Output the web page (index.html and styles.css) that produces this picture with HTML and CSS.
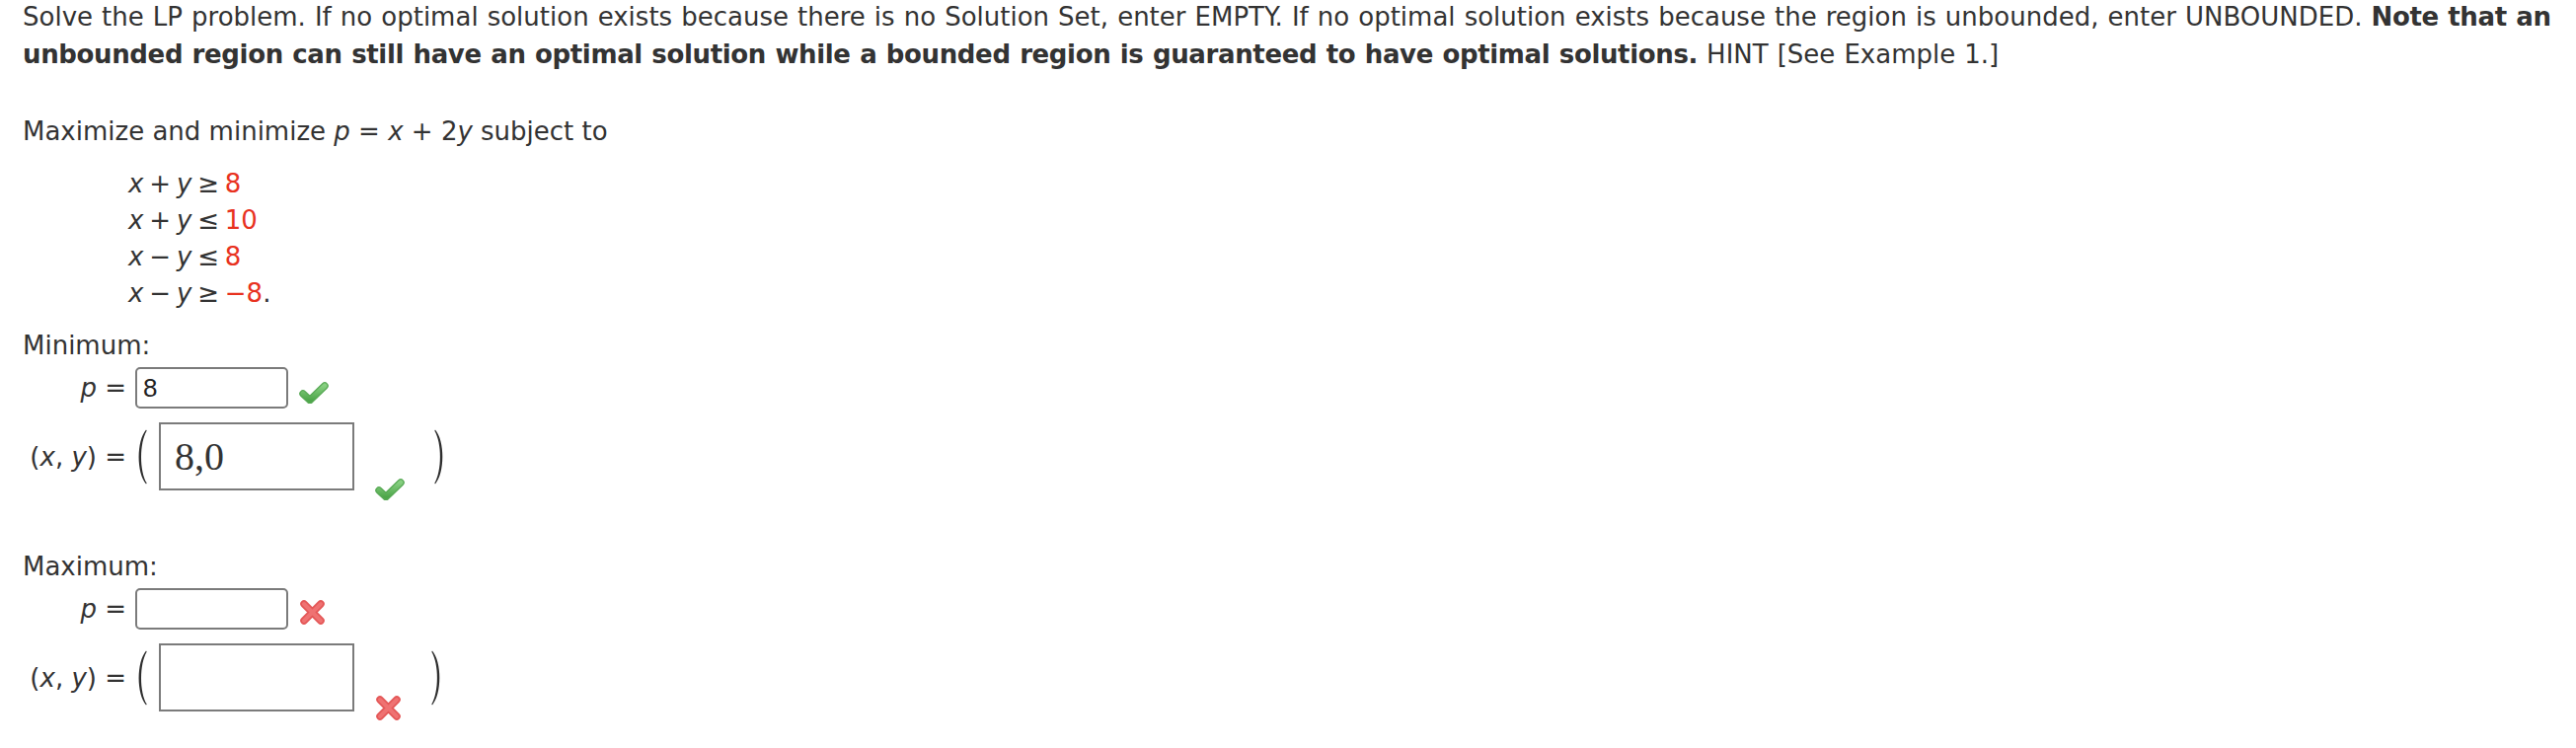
FILE: index.html
```html
<!DOCTYPE html>
<html lang="en">
<head>
<meta charset="utf-8">
<title>LP problem</title>
<link rel="stylesheet" href="styles.css">
</head>
<body>
<div class="page">
  <p class="intro">Solve the LP problem. If no optimal solution exists because there is no Solution Set, enter EMPTY. If no optimal solution exists because the region is unbounded, enter UNBOUNDED. <b>Note that an unbounded region can still have an optimal solution while a bounded region is guaranteed to have optimal solutions.</b> HINT [See Example 1.]</p>

  <p class="objective">Maximize and minimize <i>p</i> = <i>x</i> + 2<i>y</i> subject to</p>

  <div class="constraints">
    <div class="constraint"><i>x</i> + <i>y</i> ≥ <span class="num">8</span></div>
    <div class="constraint"><i>x</i> + <i>y</i> ≤ <span class="num">10</span></div>
    <div class="constraint"><i>x</i> − <i>y</i> ≤ <span class="num">8</span></div>
    <div class="constraint"><i>x</i> − <i>y</i> ≥ <span class="num">−8</span>.</div>
  </div>

  <section class="answer answer-min">
    <div class="heading">Minimum:</div>
    <div class="row row-p">
      <span class="label"><i>p</i> =</span>
      <input class="field-small" type="text" value="8" readonly>
      <svg class="icon mark-p" width="30" height="23" viewBox="0 0 30 23" aria-hidden="true">
        <defs>
          <linearGradient id="g1" x1="0" y1="0" x2="0" y2="1">
            <stop offset="0" stop-color="#86cf80"/>
            <stop offset="1" stop-color="#4ea64a"/>
          </linearGradient>
        </defs>
        <polyline points="4,13 11,19.5 26,5" fill="none" stroke="#58a955" stroke-width="7.5" stroke-linecap="round" stroke-linejoin="round"/>
        <polyline points="4,13 11,19.5 26,5" fill="none" stroke="url(#g1)" stroke-width="5" stroke-linecap="round" stroke-linejoin="round"/>
      </svg>
    </div>
    <div class="row row-xy">
      <span class="label">(<i>x</i>, <i>y</i>) =</span>
      <svg class="paren" width="12" height="56" viewBox="0 0 12 56" aria-hidden="true"><path d="M11,0.5 C1.2,12 1.2,44 11,55.5 L11.7,54.6 C4.2,42 4.2,14 11.7,1.4 Z" fill="#2e2e2e"/></svg>
      <input class="field-big" type="text" value="8,0" readonly>
      <span class="mark-slot">
        <svg class="icon" width="30" height="23" viewBox="0 0 30 23" aria-hidden="true">
          <polyline points="4,13 11,19.5 26,5" fill="none" stroke="#58a955" stroke-width="7.5" stroke-linecap="round" stroke-linejoin="round"/>
          <polyline points="4,13 11,19.5 26,5" fill="none" stroke="url(#g1)" stroke-width="5" stroke-linecap="round" stroke-linejoin="round"/>
        </svg>
      </span>
      <svg class="paren" width="12" height="56" viewBox="0 0 12 56" aria-hidden="true"><path d="M1,0.5 C10.8,12 10.8,44 1,55.5 L0.3,54.6 C7.8,42 7.8,14 0.3,1.4 Z" fill="#2e2e2e"/></svg>
    </div>
  </section>

  <section class="answer answer-max">
    <div class="heading">Maximum:</div>
    <div class="row row-p">
      <span class="label"><i>p</i> =</span>
      <input class="field-small" type="text" value="" readonly>
      <svg class="icon mark-p mark-x" width="27" height="27" viewBox="0 0 27 27" aria-hidden="true">
        <path d="M5,5 L22,22 M22,5 L5,22" fill="none" stroke="#e45757" stroke-width="7.5" stroke-linecap="round"/>
        <path d="M5,5 L22,22 M22,5 L5,22" fill="none" stroke="#ef7272" stroke-width="4" stroke-linecap="round"/>
      </svg>
    </div>
    <div class="row row-xy">
      <span class="label">(<i>x</i>, <i>y</i>) =</span>
      <svg class="paren" width="12" height="56" viewBox="0 0 12 56" aria-hidden="true"><path d="M11,0.5 C1.2,12 1.2,44 11,55.5 L11.7,54.6 C4.2,42 4.2,14 11.7,1.4 Z" fill="#2e2e2e"/></svg>
      <input class="field-big" type="text" value="" readonly>
      <span class="mark-slot">
        <svg class="icon" width="27" height="27" viewBox="0 0 27 27" aria-hidden="true">
          <path d="M5,5 L22,22 M22,5 L5,22" fill="none" stroke="#e45757" stroke-width="7.5" stroke-linecap="round"/>
          <path d="M5,5 L22,22 M22,5 L5,22" fill="none" stroke="#ef7272" stroke-width="4" stroke-linecap="round"/>
        </svg>
      </span>
      <svg class="paren" width="12" height="56" viewBox="0 0 12 56" aria-hidden="true"><path d="M1,0.5 C10.8,12 10.8,44 1,55.5 L0.3,54.6 C7.8,42 7.8,14 0.3,1.4 Z" fill="#2e2e2e"/></svg>
    </div>
  </section>
</div>
</body>
</html>
```

FILE: styles.css
```css
html, body {
  margin: 0;
  padding: 0;
  background: #ffffff;
}

body {
  min-height: 758px;
  font-family: "DejaVu Sans", Verdana, sans-serif;
  font-size: 26px;
  line-height: 38px;
  color: #333333;
}

.page {
  padding: 0 14px 30px 23px;
}

.intro {
  margin: -2px 0 0 0;
  word-spacing: 0.8px;
}

.intro b {
  font-weight: bold;
  letter-spacing: -0.36px;
}

.objective {
  margin: 40px 0 0 0;
}

.constraints {
  margin-top: 16px;
  padding-left: 107px;
  line-height: 37px;
  word-spacing: -2.4px;
}

.num {
  color: #e8321f;
}

.answer-min {
  margin-top: 15px;
}

.answer-max {
  margin-top: 58px;
}

.heading {
  line-height: 38px;
}

.row {
  display: flex;
  align-items: center;
}

.row-p {
  margin-top: 3px;
  height: 42px;
}

.row-xy {
  margin-top: 14px;
  height: 69px;
}

.label {
  width: 105px;
  text-align: right;
  white-space: nowrap;
  margin-right: 9px;
  flex: none;
}

.field-small {
  box-sizing: border-box;
  flex: none;
  width: 155px;
  height: 42px;
  margin: 0;
  padding: 0 6px;
  border: 2px solid #7b7b7b;
  border-radius: 5px;
  font-family: "Liberation Sans", Arial, sans-serif;
  font-size: 26px;
  color: #222;
  background: #fff;
  outline: none;
}

.field-big {
  box-sizing: border-box;
  flex: none;
  width: 198px;
  height: 69px;
  margin: 0 0 0 12px;
  padding: 0 14px;
  border: 2px solid #7b7b7b;
  border-radius: 0;
  font-family: "Liberation Serif", "Times New Roman", serif;
  font-size: 40px;
  color: #333;
  background: #fff;
  outline: none;
}

.paren {
  display: block;
  flex: none;
}

.icon {
  display: block;
  flex: none;
}

.row-p .mark-p {
  margin-left: 11px;
  margin-top: 8px;
}

.row-p .mark-x {
  margin-top: 6px;
}

.mark-slot {
  flex: none;
  height: 89px;
  display: flex;
  align-items: flex-end;
  margin: 0 30px 0 21px;
}
```
